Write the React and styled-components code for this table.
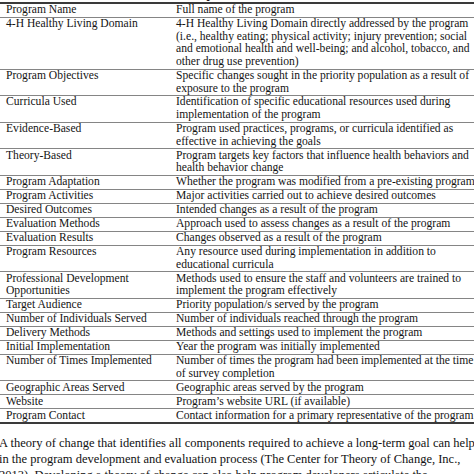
import React from "react";
import styled, { createGlobalStyle } from "styled-components";

const GlobalStyle = createGlobalStyle`
  html, body {
    margin: 0;
    padding: 0;
    background: #fff;
    overflow: hidden;
  }
  body {
    font-family: "Liberation Serif", "Times New Roman", serif;
    color: #141414;
  }
`;

const rows = [
  ["Program Name", ["Full name of the program"]],
  [
    "4-H Healthy Living Domain",
    [
      "4-H Healthy Living Domain directly addressed by the program",
      "(i.e., healthy eating; physical activity; injury prevention; social",
      "and emotional health and well-being; and alcohol, tobacco, and",
      "other drug use prevention)",
    ],
  ],
  [
    "Program Objectives",
    [
      "Specific changes sought in the priority population as a result of",
      "exposure to the program",
    ],
  ],
  [
    "Curricula Used",
    [
      "Identification of specific educational resources used during",
      "implementation of the program",
    ],
  ],
  [
    "Evidence-Based",
    [
      "Program used practices, programs, or curricula identified as",
      "effective in achieving the goals",
    ],
  ],
  [
    "Theory-Based",
    [
      "Program targets key factors that influence health behaviors and",
      "health behavior change",
    ],
  ],
  ["Program Adaptation", ["Whether the program was modified from a pre-existing program"]],
  ["Program Activities", ["Major activities carried out to achieve desired outcomes"]],
  ["Desired Outcomes", ["Intended changes as a result of the program"]],
  ["Evaluation Methods", ["Approach used to assess changes as a result of the program"]],
  ["Evaluation Results", ["Changes observed as a result of the program"]],
  [
    "Program Resources",
    [
      "Any resource used during implementation in addition to",
      "educational curricula",
    ],
  ],
  [
    ["Professional Development", "Opportunities"],
    [
      "Methods used to ensure the staff and volunteers are trained to",
      "implement the program effectively",
    ],
  ],
  ["Target Audience", ["Priority population/s served by the program"]],
  ["Number of Individuals Served", ["Number of individuals reached through the program"]],
  ["Delivery Methods", ["Methods and settings used to implement the program"]],
  ["Initial Implementation", ["Year the program was initially implemented"]],
  [
    "Number of Times Implemented",
    [
      "Number of times the program had been implemented at the time",
      "of survey completion",
    ],
  ],
  ["Geographic Areas Served", ["Geographic areas served by the program"]],
  ["Website", ["Program\u2019s website URL (if available)"]],
  ["Program Contact", ["Contact information for a primary representative of the program"]],
];

const paragraph = [
  "A theory of change that identifies all components required to achieve a long-term goal can help",
  "in the program development and evaluation process (The Center for Theory of Change, Inc.,",
  "2013). Developing a theory of change can also help program developers articulate the",
];

export default function App() {
  return (
    <>
      <GlobalStyle />
      <Page>
        <TableClip>
          <Table>
            <colgroup>
              <col style={{ width: 170 }} />
              <col />
            </colgroup>
            <thead>
              <tr>
                <HeadCell>Variable</HeadCell>
                <HeadCell>Description</HeadCell>
              </tr>
            </thead>
            <tbody>
              {rows.map(([label, desc], i) => (
                <Row key={i}>
                  <Cell>
                    {(Array.isArray(label) ? label : [label]).map((l) => (
                      <Line key={l}>{l}</Line>
                    ))}
                  </Cell>
                  <Cell>
                    {desc.map((l) => (
                      <Line key={l}>{l}</Line>
                    ))}
                  </Cell>
                </Row>
              ))}
            </tbody>
          </Table>
        </TableClip>
        <Paragraph>
          {paragraph.map((l) => (
            <Line key={l}>{l}</Line>
          ))}
        </Paragraph>
      </Page>
    </>
  );
}

const Page = styled.div`
  width: 474px;
  height: 474px;
  overflow: hidden;
`;

const TableClip = styled.div`
  overflow: hidden;
`;

const Table = styled.table`
  width: 474px;
  margin-top: -11px;
  border-collapse: collapse;
  table-layout: fixed;
  font-size: 11.6px;
  line-height: 12.6px;
  border-bottom: 2px solid #3a3a3a;
`;

const HeadCell = styled.th`
  text-align: left;
  font-weight: bold;
  padding: 0 5px;
  height: 13px;
  border-bottom: 2px solid #3a3a3a;
  white-space: nowrap;
`;

const Row = styled.tr`
  border-bottom: 1px solid #858585;
`;

const Cell = styled.td`
  padding: 0.2px 5px 0.2px 6px;
  vertical-align: top;
  white-space: nowrap;
`;

const Line = styled.div`
  white-space: nowrap;
`;

const Paragraph = styled.div`
  margin: 11px 0 0 -1px;
  font-size: 12.5px;
  line-height: 16px;
  color: #111;
`;
